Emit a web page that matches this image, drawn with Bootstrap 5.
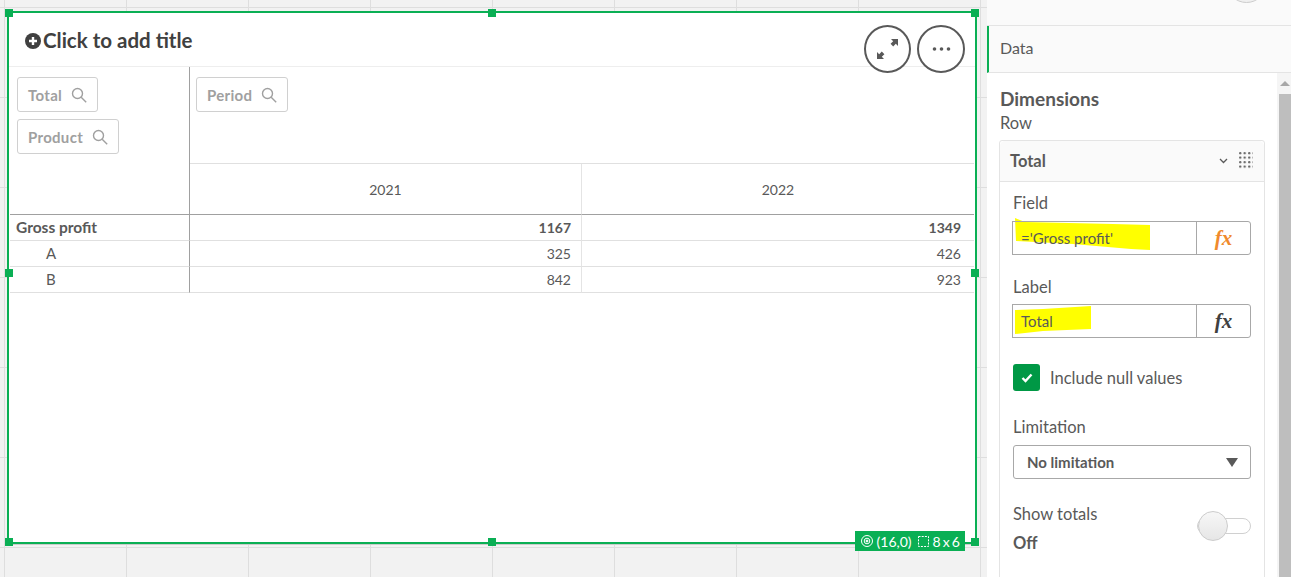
<!doctype html>
<html lang="en">
  <head>
    <meta charset="UTF-8" />
    <meta name="viewport" content="width=device-width, initial-scale=1.0" />
    <title>Edit sheet</title>
    <link
      href="https://cdn.jsdelivr.net/npm/bootstrap@5.3.0/dist/css/bootstrap.min.css"
      rel="stylesheet"
    />
    <style>
      body {
        height: 577px;
        overflow: hidden;
        font-family: "Lato", "Liberation Sans", sans-serif;
        font-size: 15px;
        color: #595959;
        background: #f2f2f2;
      }
      .sheet-canvas {
        width: 987px;
        flex: none;
        padding: 11px 10px 0 7px;
        background-color: #f2f2f2;
        background-image:
          repeating-linear-gradient(to right, #dedede 0 1px, transparent 1px 122px),
          repeating-linear-gradient(to bottom, #dedede 0 1px, transparent 1px 90px);
        background-position: 4px 7px;
      }
      .chart-frame {
        position: relative;
        height: 533px;
        background: #fff;
        border: 2px solid #0aaf54;
        box-shadow: 0 1px 0 #ccc;
      }
      .frame-handle {
        position: absolute;
        width: 8px;
        height: 8px;
        background: #0aaf54;
      }
      .chart-title {
        height: 54px;
        padding: 2px 0 0 16px;
        gap: 2px;
        border-bottom: 1px solid #eee;
        font-size: 20.5px;
        font-weight: 700;
        color: #404040;
      }
      .round-btn {
        position: absolute;
        top: 12px;
        width: 48px;
        height: 48px;
        padding: 0;
        border: 2px solid #595959;
        border-radius: 50%;
        background: #fff;
      }
      .pivot-wrap { padding: 0 1px; }
      .pivot-grid {
        width: 964px;
        table-layout: fixed;
        border-collapse: separate;
        border-spacing: 0;
      }
      .pivot-grid td, .pivot-grid th {
        padding: 0 10px;
        font-size: 14px;
        border-bottom: 1px solid #e0e0e0;
      }
      .pivot-grid .row-head {
        padding: 0 6px;
        font-size: 15px;
        border-right: 1px solid #a0a0a0;
      }
      .pivot-grid .row-total { font-size: 15.5px; font-weight: 700; }
      .pivot-grid .cell-split { border-right: 1px solid #e4e4e4; }
      .pivot-grid .cell-last { padding-right: 13px; }
      .pivot-grid .head-end { border-bottom-color: #a0a0a0; }
      .pivot-grid .head-chips { vertical-align: top; padding: 10px 7px 0; }
      .pivot-grid .head-period { height: 97px; padding-left: 6px; }
      .pivot-grid .year-cell { height: 51px; font-weight: 400; text-align: center; }
      .pivot-grid tbody tr td { height: 26px; text-align: right; }
      .pivot-grid tbody tr td.row-head { text-align: left; }
      .pivot-grid .child-label { padding-left: 36px; }
      .chip-stack { gap: 7px; }
      .field-chip {
        height: 35px;
        padding: 1px 10px 0;
        gap: 9px;
        border: 1px solid #d0d0d0;
        border-radius: 3px;
        color: #a0a0a0;
        font-size: 15px;
        font-weight: 700;
        letter-spacing: 0.3px;
        background: #fff;
      }
      .status-tag {
        position: absolute;
        right: 10px;
        bottom: -9px;
        height: 20px;
        padding: 0 5px;
        gap: 3px;
        background: #0aaf54;
        color: #fff;
        font-size: 14px;
      }
      .status-size { word-spacing: -1.5px; }
      .status-gap { margin-left: 2px; }
      .side-panel {
        flex: 1 1 0;
        min-width: 0;
        background: #fafafa;
      }
      .panel-top {
        position: relative;
        height: 26px;
        border-bottom: 1px solid #e4e4e4;
        overflow: hidden;
      }
      .panel-avatar {
        position: absolute;
        left: 239px;
        top: -38px;
        width: 41px;
        height: 41px;
        border-radius: 50%;
        background: #f0f0f0;
        border: 1px solid #ccc;
      }
      .panel-tab {
        height: 47px;
        padding: 0 0 2px 11px;
        border-left: 2px solid #0aaf54;
        border-bottom: 1px solid #e4e4e4;
        font-size: 16px;
      }
      .panel-body-wrap { height: 504px; background: #fff; }
      .panel-scroll-area { flex: 1 1 0; padding: 14px 12px 0 13px; overflow: hidden; }
      .panel-title { font-size: 19px; font-weight: 700; line-height: 24px; }
      .panel-sub { font-size: 16.5px; line-height: 24px; margin-bottom: 5px; }
      .panel-scrollbar {
        position: relative;
        width: 14px;
        padding: 21px 0 0 2px;
        background: #f5f5f5;
      }
      .panel-scrollbar::before {
        content: "";
        position: absolute;
        left: 3px;
        top: 8px;
        border: 5px solid transparent;
        border-top: 0;
        border-bottom: 5px solid #a8a8a8;
      }
      .scroll-thumb { height: 100%; background: #bebebe; }
      .dim-card {
        margin-left: -1px;
        width: 266px;
        border-color: #e4e4e4;
        border-radius: 3px;
      }
      .dim-card .card-header {
        height: 41px;
        padding: 0 11px 0 10px;
        background: #fafafa;
        border-bottom-color: #e4e4e4;
        font-size: 16.5px;
        font-weight: 700;
      }
      .chevron-gap { margin-right: 11px; }
      .dim-card .card-body { padding: 9px 13px 0; height: 400px; }
      .prop-label { font-size: 16.5px; line-height: 24px; margin-bottom: 6px; }
      .prop-label-tight { margin-bottom: 5px; }
      .prop-input {
        position: relative;
        height: 34px;
        margin-bottom: 20px;
      }
      .prop-input .form-control {
        position: relative;
        height: 34px;
        padding: 0 8px;
        background: transparent;
        border-color: #a8a8a8;
        border-radius: 3px 0 0 3px;
        font-size: 15px;
        color: #595959;
        box-shadow: none;
      }
      .prop-input .btn {
        position: relative;
        width: 55px;
        padding: 0;
        border-color: #a8a8a8;
        border-radius: 0 3px 3px 0;
        font-family: "Liberation Serif", serif;
        font-size: 21px;
        font-style: italic;
        font-weight: 700;
        line-height: 1;
        color: #404040;
      }
      .prop-input .btn.fx-active { color: #f08a2c; }
      .marker-stroke { position: absolute; left: 0; top: 0; overflow: visible; }
      .null-row { gap: 10px; margin: 26px 0 24px; }
      .null-check {
        width: 27px;
        height: 27px;
        border-radius: 3px;
        background: #009845;
      }
      .limit-select {
        height: 34px;
        margin: 0 0 23px;
        padding: 0 12px 0 13px;
        border-color: #a8a8a8;
        border-radius: 3px;
        font-size: 15px;
        font-weight: 700;
        color: #595959;
      }
      .limit-select::after {
        border-top: 9px solid #595959;
        border-left: 6px solid transparent;
        border-right: 6px solid transparent;
        border-bottom: 0;
        margin: 0;
      }
      .toggle-off {
        position: relative;
        width: 54px;
        height: 16px;
        margin-top: 16px;
        border: 1px solid #d0d0d0;
        border-radius: 8px;
        background: #fff;
      }
      .toggle-off::before {
        content: "";
        position: absolute;
        left: 0;
        top: -8px;
        width: 30px;
        height: 30px;
        border: 1px solid #ccc;
        border-radius: 50%;
        background: linear-gradient(#f7f7f7, #e6e6e6);
      }
    </style>
  </head>
  <body class="d-flex">
    <div class="sheet-canvas">
      <div class="chart-frame">
        <!-- handles -->
        <span class="frame-handle" style="left: -4px; top: -4px"></span>
        <span class="frame-handle" style="left: 479px; top: -4px"></span>
        <span class="frame-handle" style="right: -4px; top: -4px"></span>
        <span class="frame-handle" style="left: -4px; top: 256px"></span>
        <span class="frame-handle" style="right: -4px; top: 256px"></span>
        <span class="frame-handle" style="left: -4px; bottom: -4px"></span>
        <span class="frame-handle" style="left: 479px; bottom: -4px"></span>
        <span class="frame-handle" style="right: -4px; bottom: -4px"></span>

        <div class="chart-title d-flex align-items-center">
          <svg width="16" height="16" viewBox="0 0 16 16">
            <circle cx="8" cy="8" r="8" fill="#404040" />
            <path d="M8 4v8M4 8h8" stroke="#fff" stroke-width="2.4" />
          </svg>
          <span>Click to add title</span>
        </div>

        <button class="round-btn" style="left: 855px; width: 47px" aria-label="Expand">
          <svg width="43" height="44" viewBox="0 0 43 44" class="d-block">
            <path d="M25 12h7v7l-2.2-2.2-2.6 2.6-2.6-2.6 2.6-2.6zM18 32h-7v-7l2.2 2.2 2.6-2.6 2.6 2.6-2.6 2.6z" fill="#595959" />
          </svg>
        </button>
        <button class="round-btn" style="left: 908px" aria-label="More">
          <svg width="44" height="44" viewBox="0 0 44 44" class="d-block">
            <circle cx="15.5" cy="22" r="1.8" fill="#595959" />
            <circle cx="22.5" cy="22" r="1.8" fill="#595959" />
            <circle cx="29.5" cy="22" r="1.8" fill="#595959" />
          </svg>
        </button>

        <div class="pivot-wrap">
          <table class="pivot-grid">
            <colgroup>
              <col style="width: 180px" />
              <col style="width: 392px" />
              <col style="width: 392px" />
            </colgroup>
            <thead>
              <tr>
                <th rowspan="2" class="row-head head-chips head-end">
                  <div class="d-flex flex-column align-items-start chip-stack">
                    <div class="field-chip d-inline-flex align-items-center">
                      Total
                      <svg width="16" height="16" viewBox="0 0 16 16" fill="none" stroke="#a0a0a0" stroke-width="1.4">
                        <circle cx="6.5" cy="6.5" r="5" /><path d="M10.2 10.2l5 5" />
                      </svg>
                    </div>
                    <div class="field-chip d-inline-flex align-items-center">
                      Product
                      <svg width="16" height="16" viewBox="0 0 16 16" fill="none" stroke="#a0a0a0" stroke-width="1.4">
                        <circle cx="6.5" cy="6.5" r="5" /><path d="M10.2 10.2l5 5" />
                      </svg>
                    </div>
                  </div>
                </th>
                <th colspan="2" class="head-chips head-period">
                  <div class="field-chip d-inline-flex align-items-center">
                    Period
                    <svg width="16" height="16" viewBox="0 0 16 16" fill="none" stroke="#a0a0a0" stroke-width="1.4">
                      <circle cx="6.5" cy="6.5" r="5" /><path d="M10.2 10.2l5 5" />
                    </svg>
                  </div>
                </th>
              </tr>
              <tr>
                <th class="year-cell cell-split head-end">2021</th>
                <th class="year-cell head-end">2022</th>
              </tr>
            </thead>
            <tbody>
              <tr>
                <td class="row-head row-total">Gross profit</td>
                <td class="cell-split fw-bold">1167</td>
                <td class="fw-bold cell-last">1349</td>
              </tr>
              <tr>
                <td class="row-head child-label">A</td>
                <td class="cell-split">325</td>
                <td class="cell-last">426</td>
              </tr>
              <tr>
                <td class="row-head child-label">B</td>
                <td class="cell-split">842</td>
                <td class="cell-last">923</td>
              </tr>
            </tbody>
          </table>
        </div>

        <div class="status-tag d-flex align-items-center">
          <svg width="14" height="14" viewBox="0 0 14 14" fill="none" stroke="#fff" stroke-width="1">
            <circle cx="7" cy="7" r="5.5" /><circle cx="7" cy="7" r="2.8" /><circle cx="7" cy="7" r="1" fill="#fff" />
          </svg>
          <span>(16,0)</span>
          <svg width="13" height="13" viewBox="0 0 13 13" fill="none" stroke="#fff" stroke-width="1" class="status-gap">
            <rect x="1.5" y="1.5" width="10" height="10" stroke-dasharray="2 1.2" />
          </svg>
          <span class="status-size">8 x 6</span>
        </div>
      </div>
    </div>

    <aside class="side-panel d-flex flex-column">
      <div class="panel-top"><span class="panel-avatar"></span></div>
      <div class="panel-tab d-flex align-items-center">Data</div>
      <div class="panel-body-wrap d-flex">
        <div class="panel-scroll-area">
          <div class="panel-title">Dimensions</div>
          <div class="panel-sub">Row</div>
          <div class="card dim-card">
            <div class="card-header d-flex align-items-center">
              <span class="me-auto">Total</span>
              <svg width="9" height="6" viewBox="0 0 9 6" fill="none" stroke="#595959" stroke-width="1.3" class="chevron-gap">
                <path d="M1 1l3.5 3.5L8 1" />
              </svg>
              <svg width="14" height="18" viewBox="0 0 14 18" fill="#595959">
                <defs>
                  <pattern id="gripDots" width="4.5" height="4.5" patternUnits="userSpaceOnUse">
                    <circle cx="1.2" cy="1.2" r="1.1" />
                  </pattern>
                </defs>
                <rect width="14" height="18" fill="url(#gripDots)" />
              </svg>
            </div>
            <div class="card-body">
              <div class="prop-label">Field</div>
              <div class="prop-input input-group">
                <svg class="marker-stroke" width="238" height="34">
                  <polygon points="2,-3 12,1 100,3 137,4 137,29 118,28 60,23 3,20" fill="#ffff00" />
                </svg>
                <input type="text" class="form-control" value="='Gross profit'" />
                <button class="btn fx-active" type="button">fx</button>
              </div>
              <div class="prop-label prop-label-tight">Label</div>
              <div class="prop-input input-group">
                <svg class="marker-stroke" width="238" height="34">
                  <polygon points="2,6 30,5 78,2 78,25 30,27 2,30" fill="#ffff00" />
                </svg>
                <input type="text" class="form-control" value="Total" />
                <button class="btn" type="button">fx</button>
              </div>
              <div class="null-row d-flex align-items-center">
                <div class="null-check d-flex align-items-center justify-content-center">
                  <svg width="12" height="10" viewBox="0 0 12 10" fill="none" stroke="#fff" stroke-width="2.4">
                    <path d="M1.5 5l3 3 6-6.5" />
                  </svg>
                </div>
                <span class="panel-sub mb-0">Include null values</span>
              </div>
              <div class="prop-label">Limitation</div>
              <button class="btn dropdown-toggle limit-select w-100 d-flex align-items-center justify-content-between" type="button">
                No limitation
              </button>
              <div class="d-flex justify-content-between">
                <div>
                  <div class="panel-sub">Show totals</div>
                  <div class="panel-sub fw-bold">Off</div>
                </div>
                <div class="toggle-off"></div>
              </div>
            </div>
          </div>
        </div>
        <div class="panel-scrollbar"><div class="scroll-thumb"></div></div>
      </div>
    </aside>

    <script src="https://cdn.jsdelivr.net/npm/bootstrap@5.3.0/dist/js/bootstrap.bundle.min.js"></script>
  </body>
</html>
